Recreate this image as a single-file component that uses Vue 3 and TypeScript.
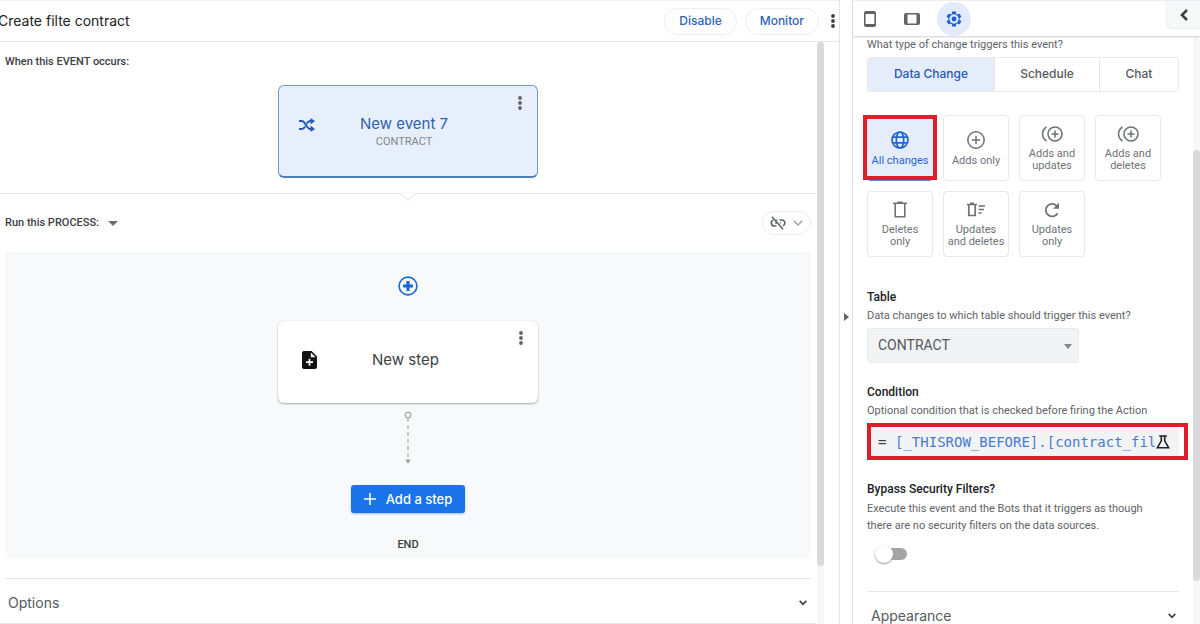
<script setup lang="ts">
import { ref } from 'vue'

interface ChangeType {
  id: string
  lines: string[]
  icon: 'globe' | 'add' | 'addMulti' | 'trash' | 'trashList' | 'refresh'
}

const triggers: string[] = ['Data Change', 'Schedule', 'Chat']
const activeTrigger = ref<string>('Data Change')

const changeTypes: ChangeType[] = [
  { id: 'all', lines: ['All changes'], icon: 'globe' },
  { id: 'adds', lines: ['Adds only'], icon: 'add' },
  { id: 'adds-updates', lines: ['Adds and', 'updates'], icon: 'addMulti' },
  { id: 'adds-deletes', lines: ['Adds and', 'deletes'], icon: 'addMulti' },
  { id: 'deletes', lines: ['Deletes', 'only'], icon: 'trash' },
  { id: 'updates-deletes', lines: ['Updates', 'and deletes'], icon: 'trashList' },
  { id: 'updates', lines: ['Updates', 'only'], icon: 'refresh' },
]
const activeChange = ref<string>('all')

const table = ref<string>('CONTRACT')
const condition = ref<string>('[_THISROW_BEFORE].[contract_fil')
const bypass = ref<boolean>(false)
</script>

<template>
  <div class="app">
    <main class="editor">
      <header class="editor-head">
        <h1 class="title">Create filte contract</h1>
        <button class="pill" type="button">Disable</button>
        <button class="pill" type="button">Monitor</button>
        <button class="icon-btn" type="button" aria-label="More">
          <svg width="4" height="14" viewBox="0 0 4 14" fill="#3c4043"><circle cx="2" cy="2" r="1.900" /><circle cx="2" cy="7" r="1.900" /><circle cx="2" cy="12" r="1.900" /></svg>
        </button>
      </header>

      <div class="editor-body">
        <div class="flow">
          <section class="event">
            <h2 class="label">When this EVENT occurs:</h2>
            <article class="card event-card">
              <svg class="card-icon" width="16" height="14" viewBox="0 0 16 14" fill="none" stroke="#2458b8" stroke-width="2">
                <path d="M0 3h3c3 0 5 8 8 8h2" />
                <path d="M0 11h3c1.200 0 2.200-1.100 3.100-2.600M7.800 5.600C8.800 4.100 9.800 3 11 3h2" />
                <path d="M11.500 0l4.500 3-4.500 3.500zM11.500 7.500l4.500 3.500-4.500 3z" fill="#2458b8" stroke="none" />
              </svg>
              <div class="card-text">
                <span class="card-title">New event 7</span>
                <span class="card-sub">CONTRACT</span>
              </div>
              <button class="icon-btn card-menu" type="button" aria-label="Event menu">
                <svg width="4" height="14" viewBox="0 0 4 14" fill="#5f6368"><circle cx="2" cy="2" r="1.900" /><circle cx="2" cy="7" r="1.900" /><circle cx="2" cy="12" r="1.900" /></svg>
              </button>
            </article>
            <svg class="notch" width="20" height="10" viewBox="0 0 20 10" fill="#fff" stroke="#e4e5e7"><path d="M0 -.5h1.500L10 7.500 18.500-.5H20" /></svg>
          </section>

          <section class="process">
            <div class="process-head">
              <button class="label process-toggle" type="button">
                Run this PROCESS:
                <svg width="10" height="5" viewBox="0 0 10 5" fill="#6b6f73"><path d="M0 0h10L5 5z" /></svg>
              </button>
              <button class="link-pill" type="button" aria-label="Link process">
                <svg width="16" height="14" viewBox="0 0 16 14" fill="none" stroke="#5f6368" stroke-width="1.600">
                  <path d="M2 .7l11 12.600M6.500 10H4.200a3 3 0 0 1-1-5.800M7.500 4h-1M9.500 4h2.300a3 3 0 0 1 1.300 5.700M5.200 7h2.600M9.800 7h1" />
                </svg>
                <svg width="10" height="6" viewBox="0 0 10 6" fill="none" stroke="#9a9da1" stroke-width="1.300"><path d="M.8.8L5 5 9.200.8" /></svg>
              </button>
            </div>

            <div class="canvas">
              <button class="icon-btn" type="button" aria-label="Insert step">
                <svg width="20" height="20" viewBox="0 0 20 20" fill="none" stroke="#1967d2"><circle cx="10" cy="10" r="8.900" stroke-width="1.600" /><path d="M10 5v10M5 10h10" stroke-width="3.200" /></svg>
              </button>

              <article class="card step-card">
                <svg class="card-icon" width="15" height="18" viewBox="0 0 15 18">
                  <path d="M2 0h7.500L15 5.500V16a2 2 0 0 1-2 2H2a2 2 0 0 1-2-2V2a2 2 0 0 1 2-2z" fill="#111" />
                  <path d="M8.800 1.400v4.800h4.800z" fill="#fff" />
                  <path d="M7.500 7.700v7M4 11.200h7" stroke="#fff" stroke-width="1.700" />
                </svg>
                <div class="card-text"><span class="card-title">New step</span></div>
                <button class="icon-btn card-menu" type="button" aria-label="Step menu">
                  <svg width="4" height="14" viewBox="0 0 4 14" fill="#5f6368"><circle cx="2" cy="2" r="1.900" /><circle cx="2" cy="7" r="1.900" /><circle cx="2" cy="12" r="1.900" /></svg>
                </button>
              </article>

              <svg class="connector" width="8" height="54" viewBox="0 0 8 54" fill="none" stroke="#aaadb1">
                <circle cx="4" cy="4" r="2.800" stroke-width="1.300" />
                <path d="M4 7v42" stroke-dasharray="4 3" stroke-width="1.300" />
                <path d="M1.500 48.500h5L4 53z" fill="#9a9da1" stroke="none" />
              </svg>

              <button class="add-step" type="button">
                <svg width="12" height="12" viewBox="0 0 12 12" stroke="#fff" stroke-width="1.500"><path d="M6 0v12M0 6h12" /></svg>
                Add a step
              </button>
              <span class="end">END</span>
            </div>
          </section>

          <button class="fold options" type="button">
            Options
            <svg width="8" height="6" viewBox="0 0 8 6" fill="none" stroke="#3c4043" stroke-width="1.600"><path d="M.7.9L4 4.300 7.300.9" /></svg>
          </button>
        </div>
        <div class="track editor-track"><div class="thumb"></div></div>
      </div>
    </main>

    <button class="gutter" type="button" aria-label="Collapse panel">
      <svg width="5" height="8" viewBox="0 0 5 8" fill="#5f6368"><path d="M0 0l5 4-5 4z" /></svg>
    </button>

    <aside class="panel">
      <header class="panel-head">
        <button class="tool" type="button" aria-label="Phone preview">
          <svg width="12" height="16" viewBox="0 0 12 16" fill="none" stroke="#5f6368"><rect x=".8" y=".8" width="10.400" height="14.400" rx="1.200" stroke-width="1.600" /><path d="M1 2h10M1 14h10" stroke-width="2" /></svg>
        </button>
        <button class="tool" type="button" aria-label="Tablet preview">
          <svg width="16" height="12" viewBox="0 0 16 12" fill="none" stroke="#5f6368"><rect x=".8" y=".8" width="14.400" height="10.400" rx="1.200" stroke-width="1.600" /><path d="M2.300 1v10M13.700 1v10" stroke-width="2.400" /></svg>
        </button>
        <button class="tool tool-on" type="button" aria-label="Settings">
          <svg width="18" height="18" viewBox="0 0 24 24" fill="#1f5fd0">
            <path d="M19.430 12.980c.04-.32.07-.64.07-.98s-.03-.66-.07-.98l2.110-1.650c.19-.15.24-.42.12-.64l-2-3.460c-.12-.22-.39-.3-.61-.22l-2.490 1c-.52-.4-1.080-.73-1.690-.98l-.38-2.650C14.460 2.180 14.250 2 14 2h-4c-.25 0-.46.18-.49.42l-.38 2.650c-.61.25-1.170.59-1.690.98l-2.490-1c-.23-.09-.49 0-.61.22l-2 3.460c-.13.22-.07.49.12.64l2.110 1.650c-.04.32-.07.65-.07.98s.03.66.07.98l-2.110 1.650c-.19.15-.24.42-.12.64l2 3.460c.12.22.39.3.61.22l2.490-1c.52.4 1.080.73 1.690.98l.38 2.650c.03.24.24.42.49.42h4c.25 0 .46-.18.49-.42l.38-2.650c.61-.25 1.170-.59 1.690-.98l2.490 1c.23.09.49 0 .61-.22l2-3.460c.12-.22.07-.49-.12-.64l-2.110-1.650zM12 18.200a6.200 6.200 0 1 1 0-12.400 6.200 6.200 0 0 1 0 12.400z" fill-rule="evenodd" />
            <circle cx="12" cy="12" r="3.300" />
          </svg>
        </button>
        <button class="collapse" type="button" aria-label="Close panel">
          <svg width="8" height="12" viewBox="0 0 8 12" fill="none" stroke="#3c4043" stroke-width="2.600"><path d="M7 1L2 6l5 5" /></svg>
        </button>
      </header>

      <div class="panel-body">
        <div class="settings">
          <p class="hint">What type of change triggers this event?</p>
          <div class="segments">
            <button
              v-for="t in triggers"
              :key="t"
              type="button"
              class="segment"
              :class="{ on: activeTrigger === t }"
              @click="activeTrigger = t"
            >{{ t }}</button>
          </div>

          <div class="tiles">
            <button
              v-for="c in changeTypes"
              :key="c.id"
              type="button"
              class="tile"
              :class="{ on: activeChange === c.id }"
              @click="activeChange = c.id"
            >
              <svg v-if="c.icon === 'globe'" width="20" height="20" viewBox="0 0 20 20" fill="none" stroke="currentColor" stroke-width="1.700"><circle cx="10" cy="10" r="8" /><ellipse cx="10" cy="10" rx="3.700" ry="8" /><path d="M2.600 7.200h14.800M2.600 12.800h14.800" /></svg>
              <svg v-else-if="c.icon === 'add'" width="20" height="20" viewBox="0 0 20 20" fill="none" stroke="currentColor" stroke-width="1.500"><circle cx="10" cy="10" r="8.200" /><path d="M10 5.800v8.400M5.800 10h8.400" /></svg>
              <svg v-else-if="c.icon === 'addMulti'" width="22" height="18" viewBox="0 0 22 18" fill="none" stroke="currentColor" stroke-width="1.600"><circle cx="14" cy="9" r="7" /><path d="M14 5.500v7M10.500 9h7M5.500 2a8.200 8.200 0 0 0 0 14" /></svg>
              <svg v-else-if="c.icon === 'trash'" width="14" height="18" viewBox="0 0 14 18" fill="none" stroke="currentColor" stroke-width="1.600"><path d="M0 2.300h14M4.500 1.300h5M2.200 2.500v13.300h9.600V2.500" /></svg>
              <svg v-else-if="c.icon === 'trashList'" width="18" height="18" viewBox="0 -1 18 18" fill="none" stroke="currentColor" stroke-width="1.700"><path d="M0 2.500h10M3 1.300h4M1.800 3v10.500h6.400V3M11.500 4H18M11.500 7.500h5.500M11.500 11h3" /></svg>
              <svg v-else width="16" height="18" viewBox="0 0 16 18" fill="none" stroke="currentColor" stroke-width="1.800"><path d="M13.600 12.300A6.300 6.300 0 1 1 12.500 4.600L14.500 6.700" /><path d="M15 1.800v6H9z" fill="currentColor" stroke="none" /></svg>
              <span class="tile-text"><span v-for="l in c.lines" :key="l">{{ l }}</span></span>
            </button>
          </div>

          <div class="field">
            <label class="name" for="table">Table</label>
            <p class="hint">Data changes to which table should trigger this event?</p>
            <div class="select-wrap">
              <select id="table" v-model="table">
                <option>CONTRACT</option>
              </select>
              <svg width="8" height="5" viewBox="0 0 8 5" fill="#80868b"><path d="M0 0h8L4 5z" /></svg>
            </div>
          </div>

          <div class="field">
            <label class="name" for="condition">Condition</label>
            <p class="hint">Optional condition that is checked before firing the Action</p>
            <div class="formula">
              <span class="equals">=</span>
              <input id="condition" v-model="condition" type="text" spellcheck="false" />
              <svg width="14" height="14" viewBox="0 0 14 14" fill="none" stroke="#202124" stroke-width="1.600"><path d="M3.200 1h7.600M5.300 1v4.800L1.300 12.800h11.400L8.700 5.800V1" /></svg>
            </div>
          </div>

          <div class="field">
            <label class="name" for="bypass">Bypass Security Filters?</label>
            <p class="hint tall">Execute this event and the Bots that it triggers as though there are no security filters on the data sources.</p>
            <input id="bypass" v-model="bypass" class="switch" type="checkbox" />
          </div>

          <button class="fold appearance" type="button">
            Appearance
            <svg width="8" height="6" viewBox="0 0 8 6" fill="none" stroke="#3c4043" stroke-width="1.600"><path d="M.7.9L4 4.300 7.300.9" /></svg>
          </button>
        </div>
        <div class="track panel-track"><div class="thumb"></div></div>
      </div>
    </aside>
  </div>
</template>

<style>
body {
  margin: 0;
}
</style>

<style scoped>
* {
  box-sizing: border-box;
}
.app {
  display: flex;
  height: 100vh;
  overflow: hidden;
  background: #fff;
  color: #3c4043;
  font-family: Roboto, "Liberation Sans", sans-serif;
}
button {
  font: inherit;
  color: inherit;
  background: none;
  border: 0;
  padding: 0;
}
svg {
  display: block;
  flex: none;
}
h1,
h2,
p {
  margin: 0;
}

.editor {
  flex: 1;
  min-width: 0;
  display: flex;
  flex-direction: column;
  border-top: 1px solid #eeeff0;
}
.editor-head {
  display: flex;
  align-items: center;
  gap: 8px;
  height: 41px;
  flex: none;
  border-bottom: 1px solid #e6e7e9;
}
.title {
  flex: 1;
  margin-left: -2px;
  font: 400 14px/20px Inter, sans-serif;
  color: #202124;
}
.pill {
  height: 27px;
  padding: 0 14px;
  border: 1px solid #eceef0;
  border-radius: 14px;
  font: 500 12px/20px Inter, sans-serif;
  color: #2d62c0;
}
.icon-btn {
  display: flex;
}
.editor-head .icon-btn {
  padding: 0 4px;
}
.editor-body {
  flex: 1;
  min-height: 0;
  display: flex;
  gap: 1px;
  padding-right: 15px;
}
.flow {
  flex: 1;
  min-width: 0;
  border-bottom: 1px solid #e6e7e9;
}
.track {
  flex: none;
  width: 7px;
  background: #f7f7f8;
}
.thumb {
  border-radius: 4px;
  background: #d9dadd;
}
.editor-track .thumb {
  height: 90%;
}
.label {
  font-size: 11px;
  line-height: 16px;
  font-weight: 500;
  color: #3c4043;
}
.event {
  position: relative;
  padding: 12px 5px 15px;
  border-bottom: 1px solid #e6e7e9;
}
.notch {
  position: absolute;
  left: 50%;
  top: 100%;
  margin-left: -10px;
}
.card {
  position: relative;
  display: flex;
  align-items: center;
  width: 260px;
  margin: 0 auto;
  border-radius: 6px;
}
.event-card {
  height: 93px;
  margin-top: 15px;
  padding: 0 20px 12px;
  border: 1px solid #6f9bc8;
  border-bottom: 2px solid #4f80b5;
  background: #e8effc;
}
.card-text {
  flex: 1;
  display: flex;
  flex-direction: column;
  align-items: center;
  margin-right: 24px;
}
.event-card .card-text {
  padding-top: 14px;
}
.card-title {
  font: 400 15px/20px Inter, sans-serif;
  color: #3c4043;
}
.event-card .card-title {
  color: #2f5fb0;
}
.card-sub {
  font-size: 11px;
  line-height: 16px;
  color: #80868b;
}
.card-menu {
  position: absolute;
  top: 10px;
  right: 15px;
}
.process {
  padding: 0 5px;
}
.process-head {
  display: flex;
  align-items: center;
  justify-content: space-between;
  height: 58px;
}
.process-toggle {
  display: flex;
  align-items: center;
  gap: 9px;
}
.link-pill {
  display: flex;
  align-items: center;
  gap: 7px;
  height: 24px;
  padding: 0 7px;
  border: 1px solid #eceef0;
  border-radius: 12px;
}
.canvas {
  display: flex;
  flex-direction: column;
  align-items: center;
  height: 306px;
  padding-top: 24px;
  background: #f7f9fb;
}
.step-card {
  height: 82px;
  margin-top: 25px;
  padding: 0 20px 4px 24px;
  background: #fff;
  box-shadow: 0 1px 2px #a9abae, 0 0 1px #c8cacc;
}
.connector {
  margin-top: 8px;
}
.add-step {
  display: flex;
  align-items: center;
  gap: 10px;
  height: 28px;
  margin-top: 20px;
  padding: 0 13px;
  border-radius: 3px;
  background: #1a73e8;
  box-shadow: 0 1px 2px #9dbbe6;
  color: #fff;
  font: 500 13px/20px Inter, sans-serif;
}
.end {
  margin-top: 24px;
  font-size: 11px;
  line-height: 16px;
  font-weight: 500;
}
.fold {
  display: flex;
  align-items: center;
  justify-content: space-between;
  border-top: 1px solid #e6e7e9;
  font: 400 14px/20px Inter, sans-serif;
  color: #55595d;
}
.options {
  width: calc(100% - 10px);
  height: 48px;
  margin: 20px 5px 0;
  padding: 0 4px 0 3px;
}

.gutter {
  flex: none;
  width: 14px;
  display: flex;
  align-items: center;
  justify-content: center;
  padding-top: 9px;
  border: solid #e3e4e6;
  border-width: 0 1px;
}

.panel {
  flex: none;
  width: 347px;
  display: flex;
  flex-direction: column;
  border-top: 1px solid #eeeff0;
}
.panel-head {
  position: relative;
  z-index: 1;
  flex: none;
  display: flex;
  align-items: center;
  height: 35px;
  background: #fff;
  box-shadow: 0 1px 2px #cfd1d4;
}
.tool {
  display: flex;
  align-items: center;
  justify-content: center;
  width: 34px;
  height: 34px;
  margin-right: 8px;
  border-radius: 50%;
}
.tool-on {
  background: #e3ebfb;
}
.collapse {
  display: flex;
  align-items: center;
  justify-content: center;
  align-self: flex-start;
  width: 34px;
  height: 28px;
  margin-left: auto;
  border: 1px solid #eceef0;
  border-width: 0 0 1px 1px;
  border-radius: 0 0 0 6px;
  background: #f7f8f9;
}
.panel-body {
  flex: 1;
  min-height: 0;
  display: flex;
  overflow: hidden;
}
.settings {
  flex: 1;
  min-width: 0;
  padding: 1px 14px 0;
}
.hint {
  font-size: 11px;
  line-height: 16px;
  color: #5f6368;
}
.segments {
  display: flex;
  height: 35px;
  margin-top: 4px;
  border: 1px solid #e8eaec;
  border-radius: 3px;
}
.segment {
  flex: 0 0 105px;
  padding-bottom: 2px;
  border-left: 1px solid #e3e5e8;
  font: 500 12px/20px Inter, sans-serif;
  color: #55595d;
}
.segment:first-child {
  flex: 1;
  border-left: 0;
}
.segment:last-child {
  flex-basis: 79px;
}
.segment.on {
  background: #e5edfb;
  color: #2559b8;
}
.tiles {
  display: grid;
  grid-template-columns: repeat(4, 66px);
  gap: 10px;
  margin-top: 23px;
}
.tile {
  position: relative;
  display: flex;
  flex-direction: column;
  align-items: center;
  justify-content: center;
  gap: 5px;
  height: 66px;
  border: 1px solid #e6e8ea;
  border-radius: 4px;
  font-size: 11px;
  line-height: 12px;
  color: #6f7377;
  white-space: nowrap;
}
.tile-text {
  display: flex;
  flex-direction: column;
}
.tile.on {
  background: #e5edfb;
  border-bottom: 1px solid #5b86c8;
  color: #1f66d0;
}
.tile.on::after {
  content: "";
  position: absolute;
  inset: -1px -5px 0;
  border: 4px solid #dc1f2a;
}
.field {
  display: flex;
  flex-direction: column;
  align-items: flex-start;
  margin-top: 21px;
}
.tiles + .field {
  margin-top: 32px;
}
.name {
  font-size: 12px;
  line-height: 16px;
  font-weight: 500;
  color: #202124;
  margin-bottom: 3px;
}
.select-wrap {
  position: relative;
  width: 212px;
  margin-top: 4px;
}
.select-wrap select {
  display: block;
  width: 100%;
  height: 35px;
  padding: 0 10px 2px;
  appearance: none;
  border: 1px solid #e9ebed;
  border-radius: 3px;
  background: #f1f3f4;
  font: 400 14px/20px Roboto, sans-serif;
  color: #55595d;
}
.select-wrap svg {
  position: absolute;
  right: 7px;
  top: 16px;
}
.formula {
  position: relative;
  display: flex;
  align-items: center;
  width: 100%;
  height: 37px;
  margin-top: 4px;
  padding-left: 11px;
  background: #f1f3f4;
  font: 400 14px/20px "DejaVu Sans Mono", monospace;
}
.formula::after {
  content: "";
  position: absolute;
  inset: 0 -9px 0 0;
  border: 4px solid #dc1f2a;
  pointer-events: none;
}
.formula .equals {
  width: 17px;
}
.formula input {
  width: 261px;
  padding: 0;
  border: 0;
  background: none;
  font: inherit;
  color: #4a7bd0;
}
.formula + .field {
  margin-top: 20px;
}
.tall {
  max-width: 290px;
  line-height: 17px;
}
.switch {
  position: relative;
  appearance: none;
  width: 30px;
  height: 12px;
  margin: 14px 0 0 10px;
  border-radius: 6px;
  background: #a5a5a5;
}
.switch::before {
  content: "";
  position: absolute;
  left: -2px;
  top: -3px;
  width: 18px;
  height: 18px;
  border-radius: 50%;
  background: #fff;
  box-shadow: 0 1px 2px #909294;
}
.appearance {
  width: 100%;
  height: 48px;
  margin-top: 31px;
  padding: 0 3px 0 4px;
}
.panel-track {
  padding-top: 114px;
}
.panel-track .thumb {
  height: 431px;
}
</style>
